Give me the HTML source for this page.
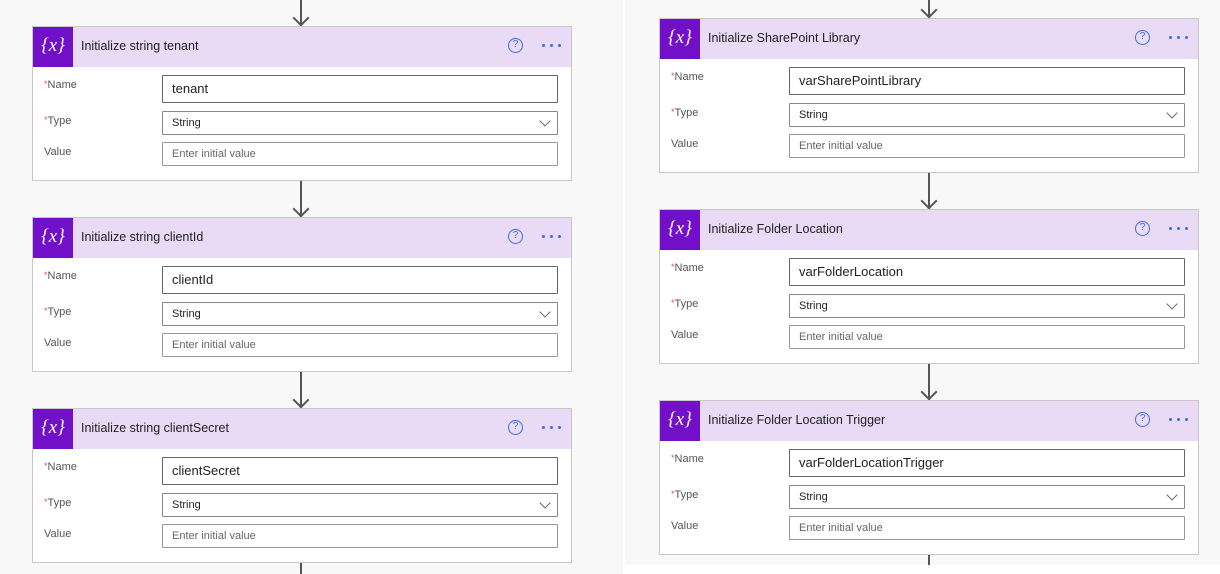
<!DOCTYPE html>
<html><head><style>
*{box-sizing:border-box;margin:0;padding:0}
body{width:1220px;height:574px;background:#fff;position:relative;overflow:hidden;font-family:"Segoe UI","Liberation Sans",sans-serif;}
.panel{position:absolute;top:0;background:#f8f8f8}
.card{position:absolute;width:540px;height:155px;background:#fff;border:1px solid #c8c8c8}
.hd{height:40px;background:#e9dbf5;position:relative}
.ic{position:absolute;left:0;top:0;width:40px;height:40px;background:#7110c8;color:#fff;font-family:"Liberation Serif",serif;font-size:19px;line-height:38px;text-align:center;font-style:italic}
.tt{position:absolute;left:48px;top:12px;font-size:12.5px;color:#222}
.q{position:absolute;left:475px;top:11px;width:15px;height:15px;border:1.3px solid #3b6be0;border-radius:50%;color:#3b6be0;font-size:10px;line-height:12px;text-align:center}
.dots{position:absolute;left:509px;top:17px;display:flex;gap:5px}
.dots i{display:block;width:3px;height:3px;background:#3b6be0;border-radius:50%}
.lb{position:absolute;left:11px;font-size:11px;color:#555}
.lb b{color:#e0505a;font-weight:normal;font-size:9px;vertical-align:top}
.in{position:absolute;left:129px;width:396px;border:1px solid #666;border-radius:1px;font-size:13px;color:#222;padding-left:9px}
.in.s{font-size:11px;border-color:#888}
.in.p{font-size:11px;color:#666;border-color:#999}
.chev{position:absolute;right:8px;top:5px;width:8px;height:8px;border-right:1px solid #666;border-bottom:1px solid #666;transform:rotate(45deg)}
.arr{position:absolute;width:2px;background:#555}
.arr.h:after{content:"";position:absolute;left:-5px;bottom:0;width:12px;height:12px;border-right:2px solid #555;border-bottom:2px solid #555;transform:rotate(45deg);box-sizing:border-box}
</style></head><body>
<div class="panel" style="left:0;width:623px;height:574px"></div>
<div class="panel" style="left:625px;width:595px;height:565px"></div>

<div class="arr h" style="left:300px;top:0;height:24px"></div>
<div class="arr h" style="left:300px;top:181px;height:34px"></div>
<div class="arr h" style="left:300px;top:372px;height:34px"></div>
<div class="arr" style="left:300px;top:563px;height:11px"></div>
<div class="arr h" style="left:928px;top:0;height:16px"></div>
<div class="arr h" style="left:928px;top:173px;height:34px"></div>
<div class="arr h" style="left:928px;top:364px;height:34px"></div>
<div class="arr" style="left:928px;top:555px;height:10px"></div>

<div class="card" style="left:32px;top:26px">
<div class="hd"><div class="ic">{x}</div><div class="tt">Initialize string tenant</div><div class="q">?</div><div class="dots"><i></i><i></i><i></i></div></div>
<div class="lb" style="top:52px"><b>*</b>Name</div><div class="in" style="top:48px;height:28px;line-height:26px">tenant</div>
<div class="lb" style="top:88px"><b>*</b>Type</div><div class="in s" style="top:84px;height:24px;line-height:22px">String<span class="chev"></span></div>
<div class="lb" style="top:119px">Value</div><div class="in p" style="top:115px;height:24px;line-height:22px">Enter initial value</div>
</div>
<div class="card" style="left:32px;top:217px">
<div class="hd"><div class="ic">{x}</div><div class="tt">Initialize string clientId</div><div class="q">?</div><div class="dots"><i></i><i></i><i></i></div></div>
<div class="lb" style="top:52px"><b>*</b>Name</div><div class="in" style="top:48px;height:28px;line-height:26px">clientId</div>
<div class="lb" style="top:88px"><b>*</b>Type</div><div class="in s" style="top:84px;height:24px;line-height:22px">String<span class="chev"></span></div>
<div class="lb" style="top:119px">Value</div><div class="in p" style="top:115px;height:24px;line-height:22px">Enter initial value</div>
</div>
<div class="card" style="left:32px;top:408px">
<div class="hd"><div class="ic">{x}</div><div class="tt">Initialize string clientSecret</div><div class="q">?</div><div class="dots"><i></i><i></i><i></i></div></div>
<div class="lb" style="top:52px"><b>*</b>Name</div><div class="in" style="top:48px;height:28px;line-height:26px">clientSecret</div>
<div class="lb" style="top:88px"><b>*</b>Type</div><div class="in s" style="top:84px;height:24px;line-height:22px">String<span class="chev"></span></div>
<div class="lb" style="top:119px">Value</div><div class="in p" style="top:115px;height:24px;line-height:22px">Enter initial value</div>
</div>

<div class="card" style="left:659px;top:18px">
<div class="hd"><div class="ic">{x}</div><div class="tt">Initialize SharePoint Library</div><div class="q">?</div><div class="dots"><i></i><i></i><i></i></div></div>
<div class="lb" style="top:52px"><b>*</b>Name</div><div class="in" style="top:48px;height:28px;line-height:26px">varSharePointLibrary</div>
<div class="lb" style="top:88px"><b>*</b>Type</div><div class="in s" style="top:84px;height:24px;line-height:22px">String<span class="chev"></span></div>
<div class="lb" style="top:119px">Value</div><div class="in p" style="top:115px;height:24px;line-height:22px">Enter initial value</div>
</div>
<div class="card" style="left:659px;top:209px">
<div class="hd"><div class="ic">{x}</div><div class="tt">Initialize Folder Location</div><div class="q">?</div><div class="dots"><i></i><i></i><i></i></div></div>
<div class="lb" style="top:52px"><b>*</b>Name</div><div class="in" style="top:48px;height:28px;line-height:26px">varFolderLocation</div>
<div class="lb" style="top:88px"><b>*</b>Type</div><div class="in s" style="top:84px;height:24px;line-height:22px">String<span class="chev"></span></div>
<div class="lb" style="top:119px">Value</div><div class="in p" style="top:115px;height:24px;line-height:22px">Enter initial value</div>
</div>
<div class="card" style="left:659px;top:400px">
<div class="hd"><div class="ic">{x}</div><div class="tt">Initialize Folder Location Trigger</div><div class="q">?</div><div class="dots"><i></i><i></i><i></i></div></div>
<div class="lb" style="top:52px"><b>*</b>Name</div><div class="in" style="top:48px;height:28px;line-height:26px">varFolderLocationTrigger</div>
<div class="lb" style="top:88px"><b>*</b>Type</div><div class="in s" style="top:84px;height:24px;line-height:22px">String<span class="chev"></span></div>
<div class="lb" style="top:119px">Value</div><div class="in p" style="top:115px;height:24px;line-height:22px">Enter initial value</div>
</div>
</body></html>
